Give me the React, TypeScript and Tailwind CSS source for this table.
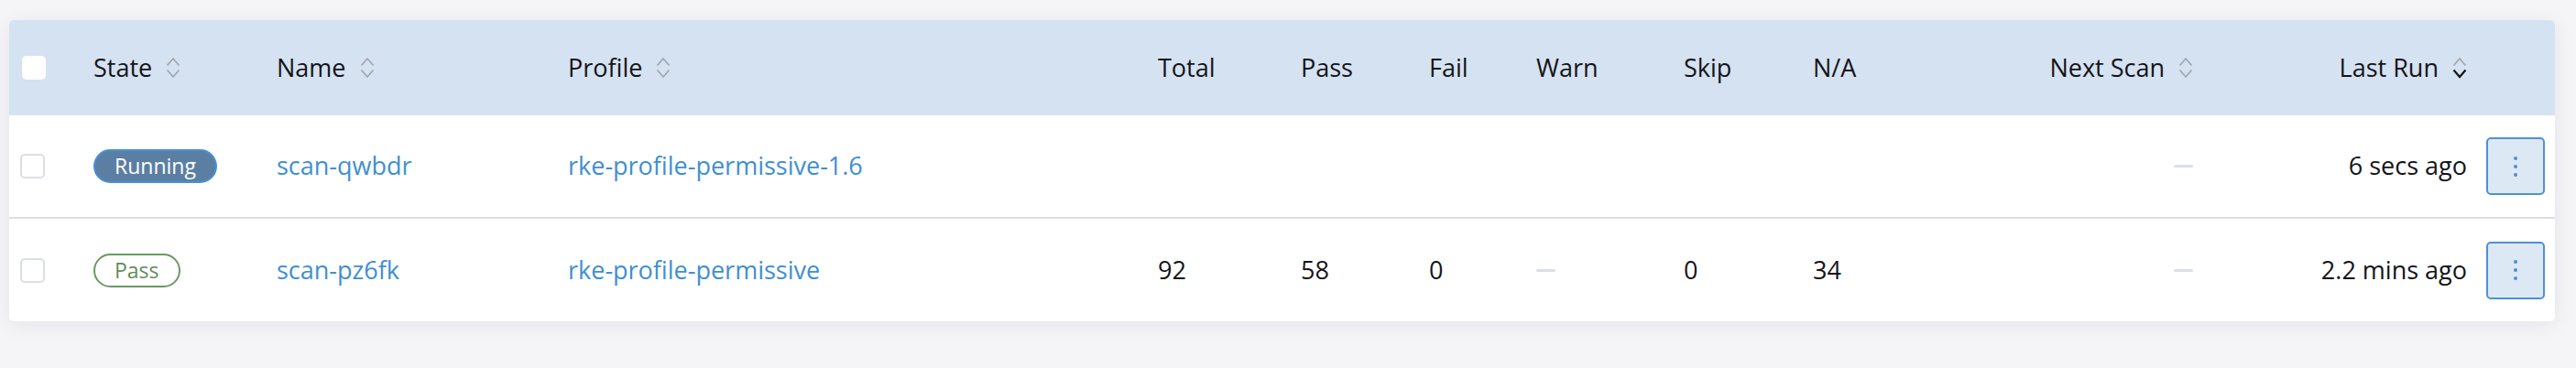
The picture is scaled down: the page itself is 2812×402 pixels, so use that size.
import React from 'react'

type SortDir = 'none' | 'desc'

const gridCols =
  'grid grid-cols-[92px_200px_318px_644px_156px_140px_117px_161px_141px_161px_254px_299px_96px]'

function SortIcon({ dir = 'none' }: { dir?: SortDir }) {
  return (
    <svg width="16" height="24" viewBox="0 0 16 24" fill="none" className="ml-[15px] shrink-0">
      <path d="M1.5 9.5 L8 2 L14.5 9.5" stroke="#a3a7b0" strokeWidth="1.8" />
      <path
        d="M1.5 14.5 L8 22 L14.5 14.5"
        stroke={dir === 'desc' ? '#141419' : '#a3a7b0'}
        strokeWidth={dir === 'desc' ? '2.2' : '1.8'}
      />
    </svg>
  )
}

function Dash() {
  return <span className="block h-[3px] w-[21px] rounded-sm bg-[#dcdfe8]" />
}

function Checkbox({ header }: { header?: boolean }) {
  return (
    <span
      className={
        header
          ? 'block size-[26px] rounded-[5px] bg-white'
          : 'block size-[27px] rounded-[5px] border-2 border-[#dcdee7] bg-white'
      }
    />
  )
}

function ActionButton() {
  return (
    <button className="flex h-[63px] w-[64px] flex-col items-center justify-center gap-[5px] rounded-[5px] border-2 border-[#4f91d2] bg-[#dde8f5]">
      <span className="size-[4px] rounded-full bg-[#4d8fd0]" />
      <span className="size-[4px] rounded-full bg-[#4d8fd0]" />
      <span className="size-[4px] rounded-full bg-[#4d8fd0]" />
    </button>
  )
}

interface ScanRow {
  state: 'Running' | 'Pass'
  name: string
  profile: string
  total?: number
  pass?: number
  fail?: number
  warn?: number
  skip?: number
  na?: number
  lastRun: string
}

const rows: ScanRow[] = [
  {
    state: 'Running',
    name: 'scan-qwbdr',
    profile: 'rke-profile-permissive-1.6',
    lastRun: '6 secs ago',
  },
  {
    state: 'Pass',
    name: 'scan-pz6fk',
    profile: 'rke-profile-permissive',
    total: 92,
    pass: 58,
    fail: 0,
    skip: 0,
    na: 34,
    lastRun: '2.2 mins ago',
  },
]

function StateBadge({ state }: { state: ScanRow['state'] }) {
  if (state === 'Running') {
    return (
      <span className="flex h-[37px] items-center rounded-full border-2 border-[#4a90d6] bg-[#5b7fa3] px-[21px] text-[23px] text-white">
        Running
      </span>
    )
  }
  return (
    <span className="flex h-[37px] items-center rounded-full border-2 border-[#6a9a62] bg-white px-[21px] text-[23px] text-[#5f8e5a]">
      Pass
    </span>
  )
}

export default function App() {
  return (
    <div
      className="min-h-[402px] bg-[#f5f5f8] pl-[10px] pt-[22px] text-[27px] text-[#141419]"
      style={{ fontFamily: '"Open Sans", "Noto Sans", sans-serif' }}
    >
      <div className="w-[2779px] overflow-hidden rounded-[5px] bg-white shadow-[0_4px_22px_rgba(20,20,50,0.07)]">
        <div className={`${gridCols} h-[104px] items-center bg-[#d5e2f1]`}>
          <div className="pl-[14px]">
            <Checkbox header />
          </div>
          <div className="flex items-center">
            State <SortIcon />
          </div>
          <div className="flex items-center">
            Name <SortIcon />
          </div>
          <div className="flex items-center">
            Profile <SortIcon />
          </div>
          <div>Total</div>
          <div>Pass</div>
          <div>Fail</div>
          <div>Warn</div>
          <div>Skip</div>
          <div>N/A</div>
          <div className="flex items-center justify-end">
            Next Scan <SortIcon />
          </div>
          <div className="flex items-center justify-end">
            Last Run <SortIcon dir="desc" />
          </div>
          <div />
        </div>

        {rows.map((row, i) => (
          <div
            key={row.name}
            className={`${gridCols} items-center ${
              i === 0 ? 'h-[113px] border-b-2 border-[#dcdee7]' : 'h-[112px]'
            }`}
          >
            <div className="pl-[12px]">
              <Checkbox />
            </div>
            <div className="flex">
              <StateBadge state={row.state} />
            </div>
            <div className="text-[#3f8fd2]">{row.name}</div>
            <div className="text-[#3f8fd2]">{row.profile}</div>
            <div>{row.total}</div>
            <div>{row.pass}</div>
            <div>{row.fail}</div>
            <div>{row.total !== undefined && row.warn === undefined ? <Dash /> : row.warn}</div>
            <div>{row.skip}</div>
            <div>{row.na}</div>
            <div className="flex justify-end">
              <Dash />
            </div>
            <div className="text-right">{row.lastRun}</div>
            <div className="pl-[21px]">
              <ActionButton />
            </div>
          </div>
        ))}
      </div>
    </div>
  )
}
